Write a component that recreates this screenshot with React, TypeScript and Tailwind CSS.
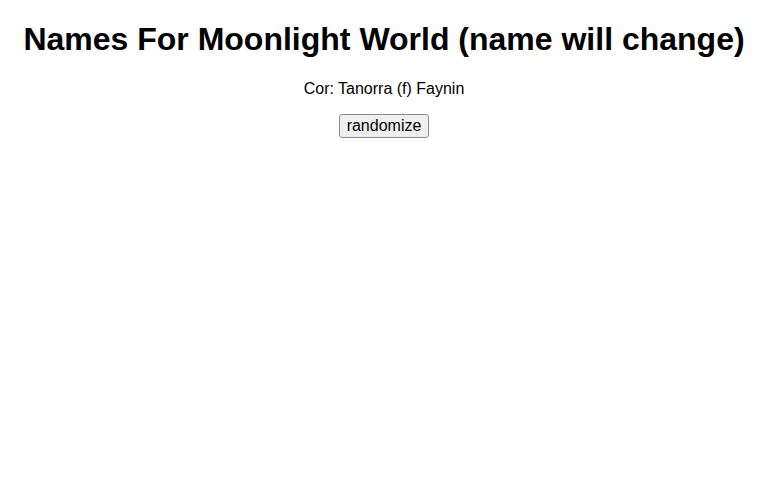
import { useState } from "react";

const names = ["Cor: Tanorra (f) Faynin", "Cor: Velmira (f) Arrowen", "Cor: Doranth (m) Keswyn"];

export default function App() {
  const [idx, setIdx] = useState(0);

  return (
    <div className="min-h-screen bg-white text-center font-['Liberation_Sans',Arial,sans-serif] text-black">
      <h1 className="my-[21.44px] text-[32px] font-bold leading-[37px]">Names For Moonlight World (name will change)</h1>
      <p className="my-4 text-base leading-[18px]">{names[idx]}</p>
      <button
        onClick={() => setIdx((idx + 1) % names.length)}
        className="rounded-[3px] border border-[#8f8f8f] bg-[#efefef] px-[7px] py-[2px] text-base leading-[18px] text-black hover:bg-[#e5e5e5]"
      >
        randomize
      </button>
    </div>
  );
}
